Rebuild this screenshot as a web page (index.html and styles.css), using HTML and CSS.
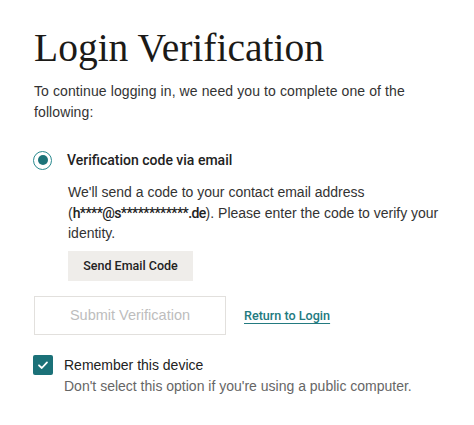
FILE: index.html
```html
<!DOCTYPE html>
<html>
<head>
<meta charset="utf-8">
<link rel="stylesheet" href="styles.css">
</head>
<body>
<main class="page">
  <h1 class="title">Login Verification</h1>
  <p class="intro">To continue logging in, we need you to complete one of the following:</p>

  <div class="option">
    <div class="option-head">
      <span class="radio"><span class="radio-dot"></span></span>
      <span class="option-label">Verification code via email</span>
    </div>
    <div class="option-body">
      <p class="option-desc">We'll send a code to your contact email address (<b class="masked">h****@s************.de</b>). Please enter the code to verify your identity.</p>
      <button class="btn-send" type="button">Send Email Code</button>
    </div>
  </div>

  <div class="actions">
    <button class="btn-submit" type="button" disabled>Submit Verification</button>
    <a class="link-return" href="#">Return to Login</a>
  </div>

  <div class="remember">
    <span class="checkbox">
      <svg viewBox="0 0 20 20" width="20" height="20"><path d="M6 10.3 L8.8 13 L14 7.4" fill="none" stroke="#fff" stroke-width="1.8" stroke-linecap="round" stroke-linejoin="round"/></svg>
    </span>
    <div class="remember-text">
      <div class="remember-label">Remember this device</div>
      <div class="remember-hint">Don't select this option if you're using a public computer.</div>
    </div>
  </div>
</main>
</body>
</html>
```
FILE: styles.css
```css
html, body {
  margin: 0;
  padding: 0;
  background: #fff;
}
body {
  font-family: "Liberation Sans", Arial, sans-serif;
  color: #222;
}
.page {
  padding: 24px 0 0 34px;
}
.title {
  font-family: "Liberation Serif", "Times New Roman", serif;
  font-weight: 400;
  font-size: 39.5px;
  line-height: 48px;
  color: #1c1a17;
  margin: 0 0 9px 0;
  letter-spacing: 0;
}
.intro {
  font-size: 14px;
  line-height: 21px;
  color: #333;
  margin: 0 0 26px 0;
  width: 390px;
  letter-spacing: 0.1px;
}
.option-head {
  display: flex;
  align-items: center;
  gap: 15px;
  height: 22px;
}
.radio {
  width: 19px;
  height: 19px;
  border: 1.5px solid #2a8a8f;
  border-radius: 50%;
  box-sizing: border-box;
  display: flex;
  align-items: center;
  justify-content: center;
  margin-left: -1px;
}
.radio-dot {
  width: 10px;
  height: 10px;
  border-radius: 50%;
  background: #1b7379;
}
.option-label {
  font-family: Roboto, "Liberation Sans", sans-serif;
  font-size: 14px;
  font-weight: 500;
  color: #222;
}
.option-body {
  padding-left: 34px;
  padding-top: 11px;
}
.option-desc {
  margin: 0;
  font-size: 14px;
  line-height: 20.5px;
  color: #333;
  width: 385px;
}
.masked {
  font-family: Roboto, "Liberation Sans", sans-serif;
  font-weight: 500;
  color: #222;
  letter-spacing: -0.6px;
}
.btn-send {
  margin-top: 7px;
  height: 30px;
  width: 125px;
  border: none;
  background: #efedea;
  font-family: Roboto, "Liberation Sans", sans-serif;
  font-size: 12.5px;
  font-weight: 500;
  color: #222;
  padding: 0;
}
.actions {
  display: flex;
  align-items: center;
  gap: 18px;
  margin-top: 15px;
}
.btn-submit {
  width: 192px;
  height: 39px;
  border: 1px solid #e2e0dd;
  background: #fff;
  font-family: inherit;
  font-size: 14.5px;
  color: #bdbdbd;
  padding: 0;
}
.link-return {
  font-family: Roboto, "Liberation Sans", sans-serif;
  font-size: 12.6px;
  font-weight: 500;
  color: #237a80;
  text-decoration: underline;
  text-underline-offset: 3px;
}
.remember {
  display: flex;
  gap: 11px;
  margin-top: 20px;
}
.checkbox {
  width: 20px;
  height: 20px;
  background: #1b7178;
  border-radius: 2px;
  flex: none;
  margin-left: -1px;
  display: block;
}
.checkbox svg {
  display: block;
}
.remember-label {
  font-size: 14px;
  line-height: 20px;
  color: #222;
}
.remember-hint {
  font-size: 14px;
  line-height: 22px;
  color: #666;
}
```
